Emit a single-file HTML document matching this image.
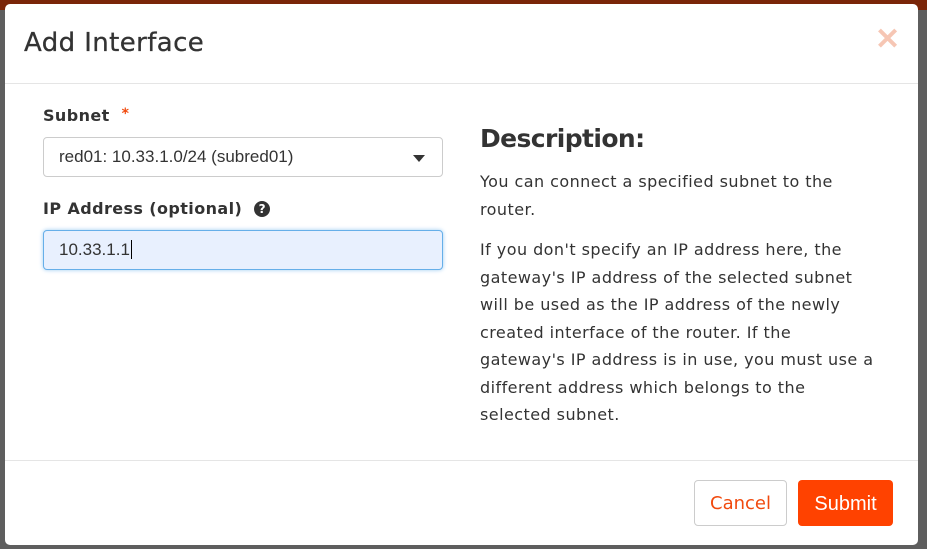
<!DOCTYPE html><html><head><style>
body{margin:0;width:927px;height:549px;background:#5e5e5e;position:relative;overflow:hidden;font-family:"DejaVu Sans",sans-serif;}
.top{position:absolute;left:0;top:0;width:927px;height:10px;background:#7a2508}
.m{position:absolute;left:5px;top:4px;width:913px;height:541px;background:#fff;border-radius:5px}
h1{position:absolute;left:19px;top:24px;margin:0;font-size:26px;font-weight:normal;color:#333;letter-spacing:0.4px;-webkit-text-stroke:0.3px #333}
.x{position:absolute;left:870px;top:18px;font-size:30px;color:#f6c6b4;font-weight:bold;font-family:"Liberation Sans",sans-serif}
.hr{position:absolute;left:0;width:913px;height:1px;background:#e5e5e5}
.lbl{position:absolute;left:38px;font-size:16px;font-weight:bold;color:#333;letter-spacing:0.4px}
.in{position:absolute;left:38px;width:400px;height:40px;border:1px solid #ccc;border-radius:4px;box-sizing:border-box;font-size:17px;color:#333;padding:9px 15px;font-family:"Liberation Sans",sans-serif}
.d{position:absolute;left:475px;font-size:16px;color:#333;line-height:27.5px;width:430px;white-space:nowrap;letter-spacing:0.45px}
.btn{position:absolute;top:476px;height:46px;box-sizing:border-box;border-radius:4px;font-size:18px;padding:12px 0;text-align:center}
</style></head><body>
<div class="top"></div>
<div class="m">
<h1>Add Interface</h1><div class="x">✕</div>
<div class="hr" style="top:79px"></div>
<div class="lbl" style="top:102px">Subnet <span style="color:#f14a0e;margin-left:6px;vertical-align:top;font-size:14px">*</span></div>
<div class="in" style="top:133px">red01: 10.33.1.0/24 (subred01)<span style="position:absolute;right:17px;top:17px;border-left:6px solid transparent;border-right:6px solid transparent;border-top:7px solid #333"></span></div>
<div class="lbl" style="top:195px">IP Address (optional) <span style="display:inline-block;width:16px;height:16px;border-radius:50%;background:#333;color:#fff;font-size:12px;text-align:center;line-height:16px;margin-left:6px;vertical-align:1px;letter-spacing:0">?</span></div>
<div class="in" style="top:226px;background:#e8f0fe;border-color:#66afe9;box-shadow:0 0 4px #9ccaf0">10.33.1.1<span style="border-left:1px solid #000;margin-left:1px"></span></div>
<div class="d" style="top:121px;font-size:25px;font-weight:bold;color:#333;letter-spacing:-0.6px">Description:</div>
<div class="d" style="top:164px">You can connect a specified subnet to the<br>router.</div>
<div class="d" style="top:232px">If you don't specify an IP address here, the<br>gateway's IP address of the selected subnet<br>will be used as the IP address of the newly<br>created interface of the router. If the<br>gateway's IP address is in use, you must use a<br>different address which belongs to the<br>selected subnet.</div>
<div class="hr" style="top:456px"></div>
<div class="btn" style="left:689px;width:93px;border:1px solid #ccc;color:#f14a0e">Cancel</div>
<div class="btn" style="left:793px;width:95px;background:#ff4200;color:#fff;font-family:'Liberation Sans',sans-serif;font-size:20px;padding-top:13px">Submit</div>
</div>
</body></html>
